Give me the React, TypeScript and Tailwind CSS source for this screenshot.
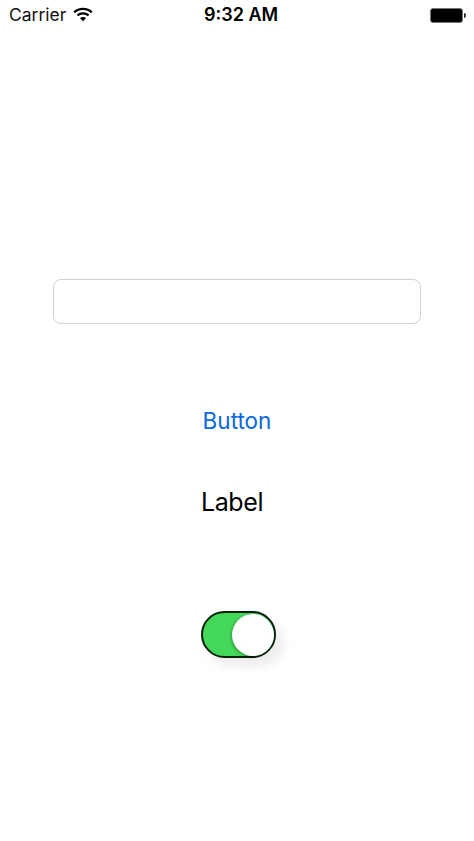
export default function App() {
  return (
    <div className="w-[474px] h-[841px] bg-white overflow-hidden text-black font-['Inter',sans-serif]">
      <div className="h-[30px] flex items-center pl-[9px] pr-[8px]">
        <div className="w-[195px] flex items-center gap-[7px]">
          <span className="text-[17.5px] leading-none text-[#111]">Carrier</span>
          <svg width="20" height="15" viewBox="0 0 20 15" fill="none" stroke="#000" strokeWidth="2.2" className="mb-[2px]">
            <path d="M1.2 5.4 C6 0.8 14 0.8 18.8 5.4" />
            <path d="M4.4 8.4 C7.4 5.6 12.6 5.6 15.6 8.4" />
            <path d="M10 14.2 L6.9 11 C8.6 9.6 11.4 9.6 13.1 11 Z" fill="#000" stroke="none" />
          </svg>
        </div>
        <span className="text-[18px] leading-none font-semibold">9:32 AM</span>
        <div className="flex items-center ml-auto">
          <div className="w-[33px] h-[15px] rounded-[3px] border border-[#777] bg-black" />
          <div className="w-[2px] h-[5px] bg-[#333] rounded-r-sm ml-[1px]" />
        </div>
      </div>
      <div className="flex flex-col pt-[249px]">
        <div className="ml-[53px] w-[368px] h-[45px] rounded-[8px] border border-[#d2d2d2] bg-white" />
        <div className="mt-[83px] h-[28px] flex items-center justify-center text-[22.5px] leading-none text-[#0a68e0]">Button</div>
        <div className="mt-[49px] ml-[201px] h-[36px] flex items-center text-[25px] tracking-[-0.4px] leading-none">Label</div>
        <div className="mt-[91px] ml-[201px] w-[75px] h-[47px] rounded-full border-2 border-[#04220a] bg-[#44d85a] flex items-center justify-end shadow-[7px_8px_12px_rgba(0,0,0,0.08)]">
          <div className="w-[42px] h-[42px] rounded-full bg-white shadow-[-1px_1px_3px_rgba(0,0,0,0.3)]" />
        </div>
      </div>
    </div>
  );
}
